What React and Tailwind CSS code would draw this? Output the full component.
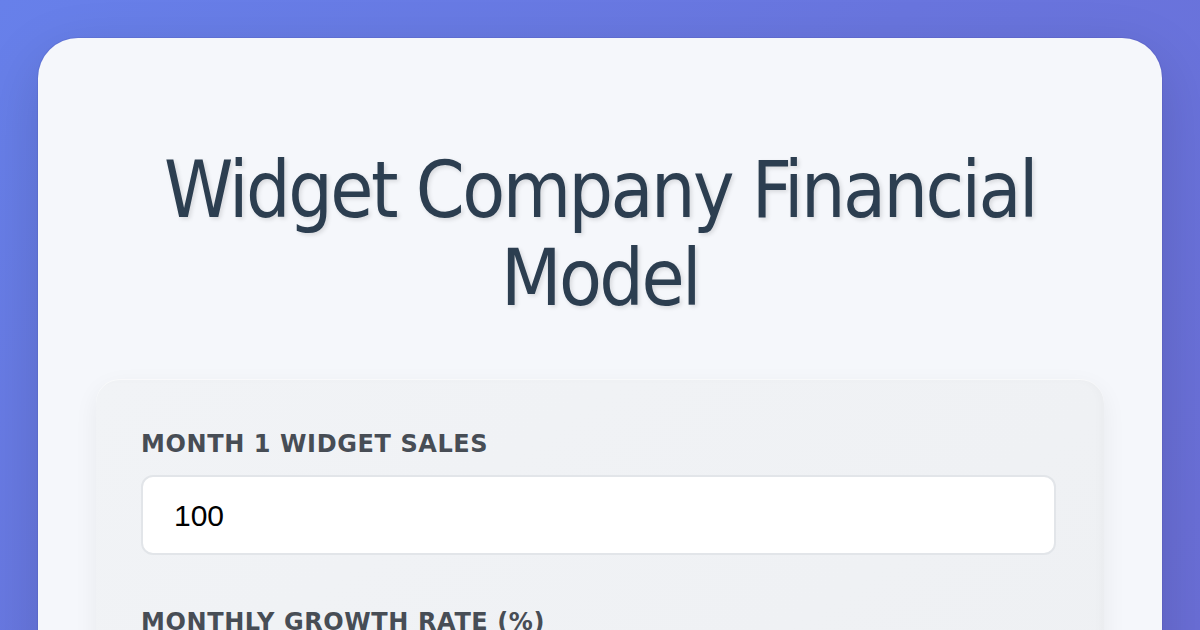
export default function App() {
  const title = { fontFamily: '"DejaVu Sans Condensed", "DejaVu Sans", sans-serif' };
  const label = { fontFamily: '"DejaVu Sans", sans-serif' };
  const mono = { fontFamily: '"Liberation Sans", Arial, sans-serif' };
  return (
    <div className="h-[630px] w-full overflow-hidden bg-[linear-gradient(135deg,#6780ea_0%,#6975de_50%,#6a6ed6_100%)] px-[38px] pt-[38px]">
      <div className="min-h-[800px] rounded-[40px] bg-[#f5f7fb] px-[58px] pt-[108px] pb-10 shadow-[0_0_0_1px_rgba(60,60,140,0.12),0_20px_60px_rgba(0,0,0,0.15)]">
        <h1
          style={title}
          className="text-center text-[78px] leading-[88px] tracking-[-2.5px] text-[#2c3e50] [text-shadow:2px_2px_4px_rgba(0,0,0,0.12)]"
        >
          Widget Company Financial Model
        </h1>
        <div className="mt-[57px] rounded-[24px] bg-[linear-gradient(145deg,#f1f3f6,#eef0f3)] pl-[45px] pr-[48px] pt-[50px] pb-10 shadow-[0_8px_24px_rgba(0,0,0,0.06),inset_0_1px_0_rgba(255,255,255,0.6),inset_-4px_0_8px_rgba(0,0,0,0.02)]">
          <label style={label} className="block text-[24px] font-bold uppercase leading-[30px] tracking-[0.6px] text-[#474d55]">
            Month 1 Widget Sales
          </label>
          <div className="mt-[16px] flex h-[80px] items-center rounded-[12px] border-2 border-[#e2e5e9] bg-white pl-[31px]">
            <span className="text-[30px] text-black" style={mono}>100</span>
          </div>
          <label style={label} className="mt-[52px] block text-[24px] font-bold uppercase leading-[30px] tracking-[0.6px] text-[#474d55]">
            Monthly Growth Rate (%)
          </label>
          <div className="mt-[16px] flex h-[80px] items-center rounded-[12px] border-2 border-[#e2e5e9] bg-white pl-[31px]">
            <span className="text-[30px] text-black" style={mono}>5</span>
          </div>
        </div>
      </div>
    </div>
  );
}
